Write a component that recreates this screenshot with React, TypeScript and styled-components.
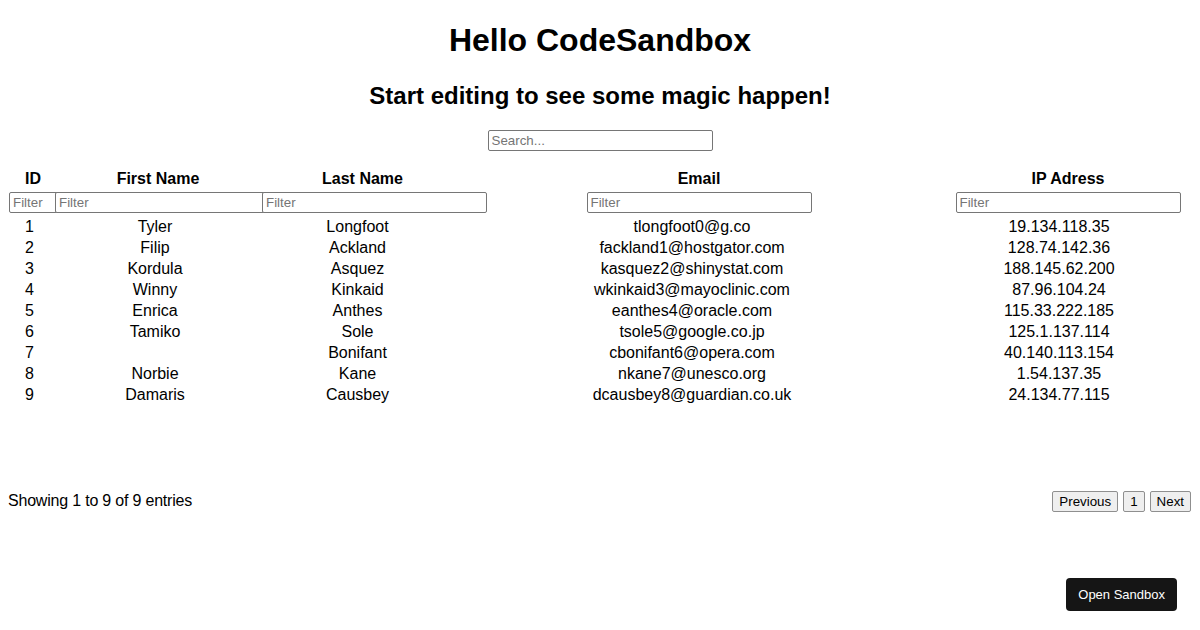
import React from "react";
import styled, { createGlobalStyle } from "styled-components";

const GlobalStyle = createGlobalStyle`
  html, body { background: #ffffff; }
  body {
    margin: 8px;
    font-family: "Liberation Sans", Arial, sans-serif;
    color: #000000;
  }
`;

const Page = styled.div`
  text-align: center;
  font-family: "Liberation Sans", Arial, sans-serif;
`;

const Title = styled.h1`
  font-size: 32px;
  font-weight: bold;
  margin: 14px 0 23.44px;
`;

const Subtitle = styled.h2`
  font-size: 24px;
  font-weight: bold;
  margin: 23.44px 0 18.92px;
`;

const SearchBar = styled.div`
  display: flex;
  justify-content: center;
  padding-top: 1px;
`;

const TextInput = styled.input`
  box-sizing: border-box;
  width: 225px;
  height: 21px;
  padding: 1px 3px;
  border: 1px solid #767676;
  border-radius: 2px;
  background: #ffffff;
  font-family: "Liberation Sans", Arial, sans-serif;
  font-size: 13.33px;
  color: #000;
  outline: none;
  &::placeholder { color: #757575; }
`;

const HeaderGrid = styled.div`
  display: grid;
  grid-template-columns: 46px 207px 193px 490px 248px;
  grid-auto-rows: auto;
  margin-top: 19px;
`;

const HeadCell = styled.div<{ $nudge?: number }>`
  min-width: 0;
  padding: 0 1px 0 ${(p) => 1 + (p.$nudge ?? 0)}px;
  font-size: 16px;
  font-weight: bold;
  line-height: 18px;
  height: 22px;
  text-align: center;
  white-space: nowrap;
`;

const FilterCell = styled.div`
  min-width: 0;
  padding: 0 1px;
  text-align: center;
  white-space: nowrap;
  height: 21px;
  line-height: 0;
`;

const BodyGrid = styled.div`
  display: grid;
  grid-template-columns: 43px 208px 197px 472px 262px;
  grid-auto-rows: 21px;
  margin-top: 3px;
`;

const Cell = styled.div`
  font-size: 16px;
  line-height: 21px;
  text-align: center;
  white-space: nowrap;
`;

const Footer = styled.div`
  display: flex;
  justify-content: space-between;
  align-items: center;
  margin-top: 85px;
  height: 22px;
`;

const Info = styled.div`
  font-size: 16px;
  line-height: 18px;
  letter-spacing: -0.2px;
`;

const Pager = styled.div`
  display: flex;
  gap: 5px;
  padding-right: 1px;
`;

const PageButton = styled.button`
  box-sizing: border-box;
  height: 21px;
  padding: 1px 6px;
  border: 1px solid #8f8f8f;
  border-radius: 2px;
  background: #efefef;
  font-family: "Liberation Sans", Arial, sans-serif;
  font-size: 13.33px;
  color: #000;
  line-height: 15px;
`;

const SandboxButton = styled.button`
  position: fixed;
  right: 23px;
  bottom: 19px;
  height: 33px;
  padding: 0 12px;
  border: none;
  border-radius: 4px;
  background: #151515;
  color: #ffffff;
  font-family: "Liberation Sans", Arial, sans-serif;
  font-size: 13px;
`;

type Row = { id: number; first: string; last: string; email: string; ip: string };

const rows: Row[] = [
  { id: 1, first: "Tyler", last: "Longfoot", email: "tlongfoot0@g.co", ip: "19.134.118.35" },
  { id: 2, first: "Filip", last: "Ackland", email: "fackland1@hostgator.com", ip: "128.74.142.36" },
  { id: 3, first: "Kordula", last: "Asquez", email: "kasquez2@shinystat.com", ip: "188.145.62.200" },
  { id: 4, first: "Winny", last: "Kinkaid", email: "wkinkaid3@mayoclinic.com", ip: "87.96.104.24" },
  { id: 5, first: "Enrica", last: "Anthes", email: "eanthes4@oracle.com", ip: "115.33.222.185" },
  { id: 6, first: "Tamiko", last: "Sole", email: "tsole5@google.co.jp", ip: "125.1.137.114" },
  { id: 7, first: "", last: "Bonifant", email: "cbonifant6@opera.com", ip: "40.140.113.154" },
  { id: 8, first: "Norbie", last: "Kane", email: "nkane7@unesco.org", ip: "1.54.137.35" },
  { id: 9, first: "Damaris", last: "Causbey", email: "dcausbey8@guardian.co.uk", ip: "24.134.77.115" },
];

const headers: { label: string; nudge: number }[] = [
  { label: "ID", nudge: 4 },
  { label: "First Name", nudge: 1 },
  { label: "Last Name", nudge: 10 },
  { label: "Email", nudge: 0 },
  { label: "IP Adress", nudge: 0 },
];

export default function App() {
  return (
    <>
      <GlobalStyle />
      <Page>
        <Title>Hello CodeSandbox</Title>
        <Subtitle>Start editing to see some magic happen!</Subtitle>
        <SearchBar>
          <TextInput placeholder="Search..." />
        </SearchBar>
        <HeaderGrid>
          {headers.map((h) => (
            <HeadCell key={h.label} $nudge={h.nudge}>
              {h.label}
            </HeadCell>
          ))}
          {headers.map((h) => (
            <FilterCell key={h.label + "-f"}>
              <TextInput placeholder="Filter" />
            </FilterCell>
          ))}
        </HeaderGrid>
        <BodyGrid>
          {rows.map((r) => (
            <React.Fragment key={r.id}>
              <Cell>{r.id}</Cell>
              <Cell>{r.first}</Cell>
              <Cell>{r.last}</Cell>
              <Cell>{r.email}</Cell>
              <Cell>{r.ip}</Cell>
            </React.Fragment>
          ))}
        </BodyGrid>
        <Footer>
          <Info>Showing 1 to 9 of 9 entries</Info>
          <Pager>
            <PageButton>Previous</PageButton>
            <PageButton>1</PageButton>
            <PageButton>Next</PageButton>
          </Pager>
        </Footer>
      </Page>
      <SandboxButton>Open Sandbox</SandboxButton>
    </>
  );
}
